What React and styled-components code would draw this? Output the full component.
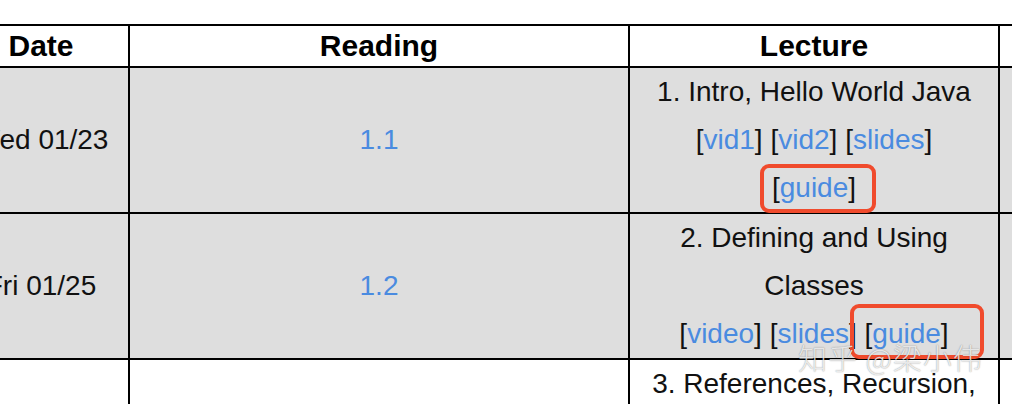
import React from 'react';
import styled, { createGlobalStyle } from 'styled-components';

const GlobalStyle = createGlobalStyle`
  html, body {
    margin: 0;
    padding: 0;
    background: #ffffff;
    overflow: hidden;
  }
  body {
    font-family: "Liberation Sans", Arial, Helvetica, sans-serif;
    color: #111;
  }
`;

const Page = styled.div`
  position: relative;
  width: 1012px;
  height: 404px;
  overflow: hidden;
  padding-top: 24px;
  box-sizing: border-box;
`;

const Schedule = styled.table`
  border-collapse: collapse;
  table-layout: fixed;
  margin-left: -48px;
  width: 1246px;
`;

const HeadCell = styled.th`
  border: 2px solid #000;
  background: #fff;
  font-size: 30px;
  font-weight: bold;
  line-height: 40px;
  padding: 0;
  text-align: center;
  color: #000;
`;

const Row = styled.tr`
  background: ${props => (props.shaded ? '#dedede' : '#ffffff')};
`;

const Cell = styled.td`
  border: 2px solid #000;
  padding: 0;
  font-size: 28px;
  line-height: 48px;
  text-align: center;
  vertical-align: middle;
  color: #111;
`;

const Line = styled.div`
  white-space: nowrap;
`;

const Link = styled.a`
  color: #4a8be0;
  text-decoration: none;
`;

const Marked = styled.span`
  position: relative;
  display: inline-block;

  &::after {
    content: '';
    position: absolute;
    left: ${props => props.l}px;
    right: ${props => props.r}px;
    top: ${props => props.t}px;
    bottom: ${props => props.b}px;
    border: 4px solid #f04b2d;
    border-radius: 9px;
    pointer-events: none;
  }
`;

const Watermark = styled.div`
  position: absolute;
  left: 798px;
  top: 337px;
  font-family: "Noto Sans CJK SC", "Liberation Sans", sans-serif;
  font-size: 29px;
  font-weight: 300;
  letter-spacing: 1px;
  line-height: 40px;
  color: rgba(255, 255, 255, 0.8);
  text-shadow: 0 0 1px rgba(0, 0, 0, 0.35), 0 0 2px rgba(0, 0, 0, 0.15);
  white-space: nowrap;
  pointer-events: none;
`;

const Ref = ({ children }) => (
  <>
    [<Link href="#">{children}</Link>]
  </>
);

const RefList = ({ items }) =>
  items.map((l, i) => (
    <React.Fragment key={l}>
      {i > 0 && ' '}
      <Ref>{l}</Ref>
    </React.Fragment>
  ));

const lectures = [
  {
    date: 'Wed 01/23',
    reading: '1.1',
    lines: [
      '1. Intro, Hello World Java',
      <RefList items={['vid1', 'vid2', 'slides']} />,
      <Marked l={-12} r={-20} t={0} b={-1}>
        <Ref>guide</Ref>
      </Marked>,
    ],
  },
  {
    date: 'Fri 01/25',
    reading: '1.2',
    lines: [
      '2. Defining and Using',
      'Classes',
      <>
        <RefList items={['video', 'slides']} />{' '}
        <Marked l={-15} r={-35} t={-6} b={-1}>
          <Ref>guide</Ref>
        </Marked>
      </>,
    ],
  },
  {
    date: 'Mon 01/28',
    reading: '2.1',
    lines: [
      '3. References, Recursion,',
      'and Lists',
      <RefList items={['video', 'slides', 'guide']} />,
    ],
  },
];

const App = () => {
  return (
    <>
      <GlobalStyle />
      <Page>
        <Schedule>
          <colgroup>
            <col style={{ width: '176px' }} />
            <col style={{ width: '500px' }} />
            <col style={{ width: '370px' }} />
            <col style={{ width: '200px' }} />
          </colgroup>
          <thead>
            <tr>
              <HeadCell>Date</HeadCell>
              <HeadCell>Reading</HeadCell>
              <HeadCell>Lecture</HeadCell>
              <HeadCell>Discussion</HeadCell>
            </tr>
          </thead>
          <tbody>
            {lectures.map((lec, i) => (
              <Row key={lec.date} shaded={i < 2}>
                <Cell>{lec.date}</Cell>
                <Cell>
                  <Link href="#">{lec.reading}</Link>
                </Cell>
                <Cell>
                  {lec.lines.map((line, j) => (
                    <Line key={j}>{line}</Line>
                  ))}
                </Cell>
                <Cell />
              </Row>
            ))}
          </tbody>
        </Schedule>
        <Watermark>知乎 @梁小伟</Watermark>
      </Page>
    </>
  );
};

export default App;
